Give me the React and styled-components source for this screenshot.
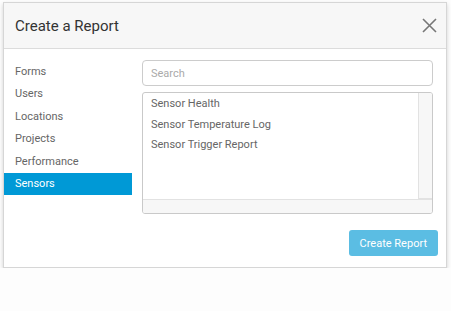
import React from 'react';
import styled, { createGlobalStyle } from 'styled-components';

const Global = createGlobalStyle`
  html, body {
    margin: 0;
    padding: 0;
    background: #fdfdfd;
    font-family: Roboto, "Liberation Sans", sans-serif;
  }
`;

const Page = styled.div`
  padding: 2px 4px 0 3px;
  width: 451px;
  box-sizing: border-box;
`;

const Modal = styled.div`
  width: 444px;
  background: #ffffff;
  border: 1px solid #d6d6d6;
  box-sizing: border-box;
  box-shadow: 0 2px 4px rgba(0, 0, 0, 0.18);
`;

const Header = styled.div`
  display: flex;
  align-items: center;
  justify-content: space-between;
  height: 45px;
  padding: 0 7px 0 11px;
  background: #f7f7f7;
  border-bottom: 1px solid #dcdcdc;
`;

const Title = styled.h4`
  margin: 0;
  font-size: 15px;
  font-weight: 400;
  color: #333333;
`;

const Close = styled.button`
  border: 0;
  background: none;
  padding: 0;
  width: 20px;
  height: 20px;
  display: flex;
  align-items: center;
  justify-content: center;
  cursor: pointer;
`;

const Body = styled.div`
  display: flex;
  gap: 10px;
  padding: 11px 13px 0 0;
`;

const Nav = styled.ul`
  list-style: none;
  margin: 1px 0 0;
  padding: 0;
  width: 128px;
  flex: none;
`;

const NavItem = styled.li`
  height: 22.4px;
  line-height: 22.4px;
  padding-left: 11px;
  font-size: 11px;
  color: ${p => (p.$active ? '#ffffff' : '#666666')};
  background: ${p => (p.$active ? '#0099d6' : 'transparent')};
`;

const Right = styled.div`
  flex: 1;
  display: flex;
  flex-direction: column;
  gap: 6px;
`;

const Search = styled.input`
  height: 26px;
  box-sizing: border-box;
  border: 1px solid #cccccc;
  border-radius: 4px;
  padding: 0 8px;
  font-family: inherit;
  font-size: 11px;
  color: #333;
  outline: none;
  &::placeholder {
    color: #aaaaaa;
  }
`;

const ListBox = styled.div`
  height: 122px;
  box-sizing: border-box;
  border: 1px solid #c9c9c9;
  border-radius: 3px;
  display: grid;
  grid-template-columns: 1fr 14px;
  grid-template-rows: 1fr 14px;
  overflow: hidden;
`;

const Options = styled.div`
  padding: 1px 0 0 8px;
`;

const Option = styled.div`
  height: 20.5px;
  line-height: 20.5px;
  font-size: 11px;
  color: #666666;
`;

const VTrack = styled.div`
  background: #f7f7f7;
  border-left: 1px solid #e2e2e2;
  border-bottom: 1px solid #e2e2e2;
`;

const HTrack = styled.div`
  grid-column: 1 / 3;
  background: #f7f7f7;
  border-top: 1px solid #e2e2e2;
`;

const Footer = styled.div`
  display: flex;
  justify-content: flex-end;
  padding: 16px 8px 11px 0;
`;

const Primary = styled.button`
  height: 26px;
  padding: 0 11px;
  border: 0;
  border-radius: 3px;
  background: #5bbde3;
  color: #ffffff;
  font-family: inherit;
  font-size: 11px;
`;

const navItems = ['Forms', 'Users', 'Locations', 'Projects', 'Performance', 'Sensors'];
const reports = ['Sensor Health', 'Sensor Temperature Log', 'Sensor Trigger Report'];

export default function App() {
  return (
    <Page>
      <Global />
      <Modal>
        <Header>
          <Title>Create a Report</Title>
          <Close aria-label="Close">
            <svg width="15" height="15" viewBox="0 0 15 15">
              <path d="M1 1L14 14M14 1L1 14" stroke="#777" strokeWidth="1.6" />
            </svg>
          </Close>
        </Header>
        <Body>
          <Nav>
            {navItems.map(n => (
              <NavItem key={n} $active={n === 'Sensors'}>{n}</NavItem>
            ))}
          </Nav>
          <Right>
            <Search placeholder="Search" />
            <ListBox>
              <Options>
                {reports.map(r => <Option key={r}>{r}</Option>)}
              </Options>
              <VTrack />
              <HTrack />
            </ListBox>
          </Right>
        </Body>
        <Footer>
          <Primary>Create Report</Primary>
        </Footer>
      </Modal>
    </Page>
  );
}
